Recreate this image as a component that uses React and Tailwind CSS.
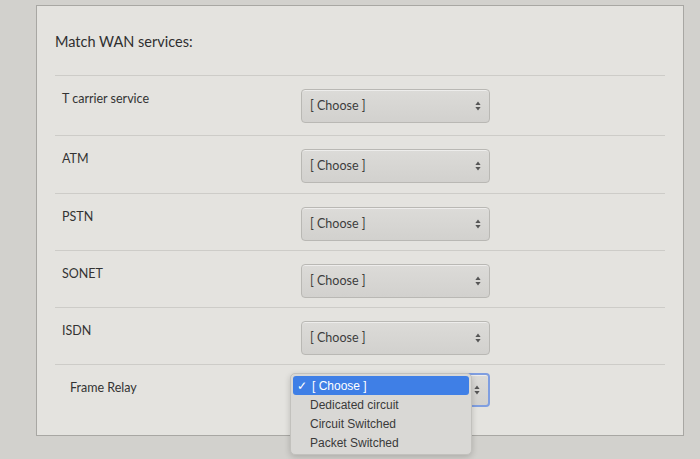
import React from "react";

const rows = [
  { label: "T carrier service", h: "h-[60px]" },
  { label: "ATM", h: "h-[58px]" },
  { label: "PSTN", h: "h-[57px]" },
  { label: "SONET", h: "h-[57px]" },
  { label: "ISDN", h: "h-[57px]" },
];

function Arrows() {
  return (
    <svg width="6" height="10" viewBox="0 0 6 10" className="fill-[#555]">
      <path d="M3 0.5 L5.6 4 H0.4 Z" />
      <path d="M3 9.5 L5.6 6 H0.4 Z" />
    </svg>
  );
}

function Choose({ focused }) {
  return (
    <div
      className={
        "w-[189px] h-[34px] rounded-[4px] flex items-center justify-between pl-[8px] pr-[8px] bg-gradient-to-b from-[#dcdbd8] to-[#d2d1ce] shadow-[inset_0_1px_0_rgba(255,255,255,0.5)] " +
        (focused
          ? "border-2 border-[#7f9ee0]"
          : "border border-[#b9b8b4]")
      }
    >
      <span className="text-[12.5px] text-[#3d3d3d]">{focused ? "" : "[ Choose ]"}</span>
      <Arrows />
    </div>
  );
}

export default function App() {
  return (
    <div
      className="w-[700px] h-[459px] bg-[#d2d1cd] pt-[5px] pl-[36px] pr-[16px] overflow-hidden"
      style={{ fontFamily: "Lato, 'Liberation Sans', sans-serif" }}
    >
      <div className="relative h-[431px] bg-[#e4e3df] border border-[#a8a7a3]">
        <div className="h-[69px] pl-[18px] pt-[25px] text-[14.5px] text-[#2f2f2f]">
          Match WAN services:
        </div>

        {rows.map((r) => (
          <div
            key={r.label}
            className={"mx-[18px] border-t border-[#cdccc8] flex " + r.h}
          >
            <div className="w-[246px] pl-[7px] pt-[14px] text-[12.5px] text-[#333]">
              {r.label}
            </div>
            <div className="pt-[13px]">
              <Choose />
            </div>
          </div>
        ))}

        <div className="mx-[18px] border-t border-[#cdccc8] flex h-[72px]">
          <div className="w-[246px] pl-[15px] pt-[14px] text-[12.5px] text-[#333]">
            Frame Relay
          </div>
          <div className="pt-[8px]">
            <Choose focused />
          </div>
        </div>

        {/* open native menu */}
        <div
          className="absolute left-[253px] top-[367px] w-[182px] h-[82px] rounded-[5px] bg-[#d9d8d5] border border-[#c2c1bd] shadow-[0_2px_6px_rgba(0,0,0,0.18)] px-[2px] py-[2px] text-[12px] text-[#3a3a3a]"
          style={{ fontFamily: "'Liberation Sans', Arial, sans-serif" }}
        >
          <div className="h-[19px] rounded-[3px] bg-[#3f7fe6] text-white flex items-center pl-[4px]">
            <span className="w-[15px]">✓</span>
            <span>[ Choose ]</span>
          </div>
          <div className="h-[19px] flex items-center pl-[17px]">Dedicated circuit</div>
          <div className="h-[19px] flex items-center pl-[17px]">Circuit Switched</div>
          <div className="h-[19px] flex items-center pl-[17px]">Packet Switched</div>
        </div>
      </div>
    </div>
  );
}
